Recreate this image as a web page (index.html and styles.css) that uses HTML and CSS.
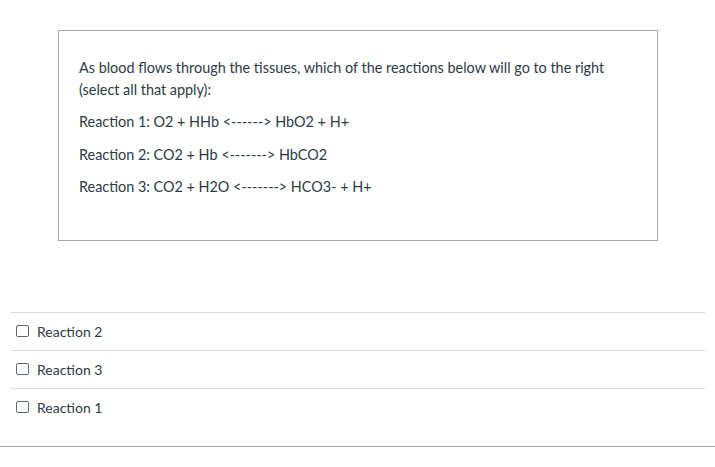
FILE: index.html
```html
<!DOCTYPE html>
<html>
<head>
<meta charset="utf-8">
<link rel="stylesheet" href="styles.css">
</head>
<body>
<div class="page">
  <div class="question-box">
    <p>As blood flows through the tissues, which of the reactions below will go to the right (select all that apply):</p>
    <p>Reaction 1: O2 + HHb &lt;------&gt; HbO2 + H+</p>
    <p>Reaction 2: CO2 + Hb &lt;-------&gt; HbCO2</p>
    <p>Reaction 3: CO2 + H2O &lt;-------&gt; HCO3- + H+</p>
  </div>
  <div class="answers">
    <label class="answer"><span class="box"></span><span class="label">Reaction 2</span></label>
    <label class="answer"><span class="box"></span><span class="label">Reaction 3</span></label>
    <label class="answer"><span class="box"></span><span class="label">Reaction 1</span></label>
  </div>
  <div class="footer-line"></div>
</div>
</body>
</html>
```

FILE: styles.css
```css
html, body {
  margin: 0;
  padding: 0;
  background: #ffffff;
}

body {
  font-family: Lato, "Open Sans", sans-serif;
  color: #2d3b45;
}

.page {
  width: 715px;
  padding-top: 30px;
}

.question-box {
  box-sizing: border-box;
  width: 600px;
  margin-left: 58px;
  border: 1px solid #a8a8a8;
  padding: 15px 20px 31px 20px;
  font-size: 14.4px;
  line-height: 21.5px;
}

.question-box p {
  margin: 11px 0;
}

.answers {
  margin: 71px 10px 0 11px;
}

.answer {
  display: flex;
  align-items: center;
  gap: 8px;
  height: 37px;
  padding-left: 5px;
  border-top: 1px solid #dcdcdc;
  font-size: 14px;
}

.box {
  box-sizing: border-box;
  width: 13px;
  height: 12px;
  border: 1px solid #5e6a73;
  border-radius: 2px;
  background: #fff;
}

.footer-line {
  margin-top: 20px;
  border-top: 1px solid #a8a8a8;
}
```
